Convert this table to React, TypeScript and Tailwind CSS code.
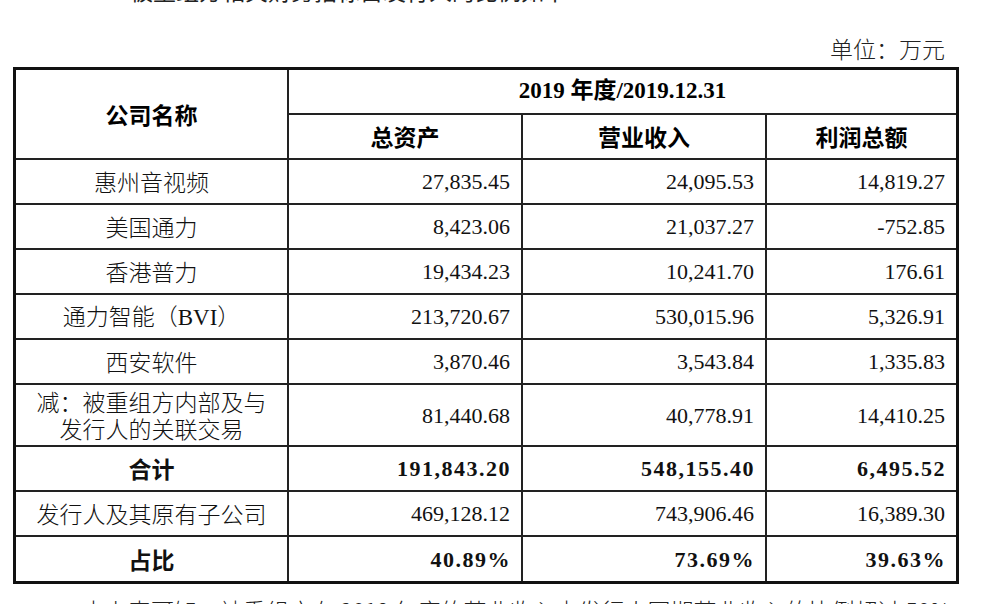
type Row = {
  name: React.ReactNode
  values: string[]
  bold?: boolean
  tall?: boolean
}

const rows: Row[] = [
  { name: '惠州音视频', values: ['27,835.45', '24,095.53', '14,819.27'] },
  { name: '美国通力', values: ['8,423.06', '21,037.27', '-752.85'] },
  { name: '香港普力', values: ['19,434.23', '10,241.70', '176.61'] },
  {
    name: (
      <>
        通力智能（<span className="font-['Liberation_Serif',serif]">BVI</span>）
      </>
    ),
    values: ['213,720.67', '530,015.96', '5,326.91'],
  },
  { name: '西安软件', values: ['3,870.46', '3,543.84', '1,335.83'] },
  {
    name: (
      <>
        <span className="block h-[27px]">减：被重组方内部及与</span>
        <span className="block h-[27px]">发行人的关联交易</span>
      </>
    ),
    values: ['81,440.68', '40,778.91', '14,410.25'],
    tall: true,
  },
  { name: '合计', values: ['191,843.20', '548,155.40', '6,495.52'], bold: true },
  { name: '发行人及其原有子公司', values: ['469,128.12', '743,906.46', '16,389.30'] },
  { name: '占比', values: ['40.89%', '73.69%', '39.63%'], bold: true },
]

export default function App() {
  return (
    <div className="w-[1000px] h-[604px] overflow-hidden bg-white text-black font-['Noto_Sans_CJK_SC',sans-serif]">
      {/* cut-off heading above */}
      <div className="h-[5px] overflow-hidden">
        <div className="-mt-[21px] pl-[130px] text-[23px] leading-[23px] whitespace-nowrap text-[#222]">
          被重组方相关财务指标占发行人的比例如下
        </div>
      </div>

      {/* unit */}
      <div className="h-[62px] flex items-end justify-end pr-[55px] pb-[4px]">
        <span className="text-[23px] leading-[30px] font-light text-[#222]">单位：万元</span>
      </div>

      {/* table */}
      <div className="ml-[13px] w-[946px] border-[3px] border-[#111]">
        <div className="grid grid-cols-[273px_234px_244px_189px]">
          <div className="row-span-2 h-[90px] flex items-center justify-center border-r-2 border-b-2 border-[#222] text-[23px] font-bold">
            公司名称
          </div>
          <div className="col-span-3 h-[45px] flex items-center justify-center border-b-2 border-[#222] text-[23px] font-bold font-['Liberation_Serif','Noto_Sans_CJK_SC',serif]">
            2019 年度/2019.12.31
          </div>
          <div className="h-[45px] flex items-center justify-center border-r-2 border-b-2 border-[#222] text-[23px] font-bold">
            总资产
          </div>
          <div className="h-[45px] flex items-center justify-center border-r-2 border-b-2 border-[#222] text-[23px] font-bold">
            营业收入
          </div>
          <div className="h-[45px] flex items-center justify-center border-b-2 border-[#222] text-[23px] font-bold">
            利润总额
          </div>

          {rows.map((r, ri) => {
            const last = ri === rows.length - 1
            const h = r.tall ? 'h-[62px]' : last ? 'h-[44px]' : 'h-[45px]'
            const bb = last ? '' : 'border-b-2'
            return (
              <div key={ri} className="contents">
                <div
                  className={`${h} ${bb} border-r-2 border-[#222] flex flex-col items-center justify-center text-center text-[23px] leading-[27px] text-[#111] ${r.bold ? 'font-bold' : 'font-light'}`}
                >
                  <span>{r.name}</span>
                </div>
                {r.values.map((v, vi) => (
                  <div
                    key={vi}
                    className={`${h} ${bb} ${vi < 2 ? 'border-r-2' : ''} border-[#222] flex items-center justify-end text-[22px] text-[#111] font-['Liberation_Serif',serif] ${r.bold ? 'font-bold tracking-[1.5px] pr-[10px]' : 'pr-[11px]'}`}
                  >
                    {v}
                  </div>
                ))}
              </div>
            )
          })}
        </div>
      </div>

      {/* cut-off paragraph below */}
      <div className="mt-[15px] pl-[82px] text-[23px] leading-[23px] whitespace-nowrap text-[#222] font-light">
        由上表可知，被重组方在 2019 年度的营业收入占发行人同期营业收入的比例超过 50%
      </div>
    </div>
  )
}
